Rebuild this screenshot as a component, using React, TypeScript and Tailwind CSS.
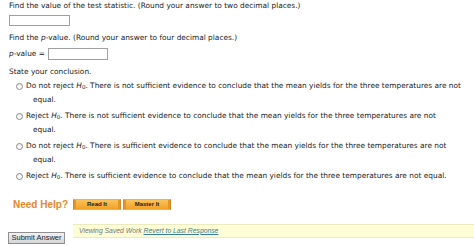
import React from "react";

const H0 = () => (
  <span>
    <span className="italic">H</span>
    <sub className="text-[5.5px] relative top-[1px] align-baseline">0</sub>
  </span>
);

const Radio = () => (
  <span className="inline-block w-[7px] h-[7px] rounded-full border border-[#8a8a8a] bg-gradient-to-b from-[#f0f0f0] to-white shrink-0" />
);

const Option = ({ first, second }: { first: React.ReactNode; second?: string }) => (
  <div className="mt-[2px]">
    <div className="flex items-center h-[14px] pl-[7px] gap-[3px] whitespace-nowrap">
      <Radio />
      <span>{first}</span>
    </div>
    {second && <div className="h-[14px] leading-[14px] pl-[24px]">{second}</div>}
  </div>
);

const OrangeBtn = ({ label }: { label: string }) => (
  <div className="w-[48px] h-[11px] flex items-center justify-center border border-[#b9b9b9] border-l-[#d08a2a] border-r-[#d08a2a] bg-gradient-to-b from-[#fbc257] to-[#f2a126] shadow-[inset_2px_0_0_#e59426,inset_-2px_0_0_#e59426] font-['Liberation_Sans',Arial,sans-serif] font-bold text-[6px] text-[#222]">
    {label}
  </div>
);

export default function App() {
  return (
    <div className="w-[474px] h-[246px] bg-white overflow-hidden font-['DejaVu_Sans',Verdana,sans-serif] text-[7.4px] text-[#222]">
      <div className="pl-[9px] pt-[1px]">
        <div className="h-[10px] leading-[10px] whitespace-nowrap">
          Find the value of the test statistic. (Round your answer to two decimal places.)
        </div>
        <div className="mt-[4px] w-[61px] h-[11px] border border-[#a0a0a0] bg-white" />
        <div className="mt-[7px] h-[10px] leading-[10px] whitespace-nowrap">
          Find the <span className="italic">p</span>-value. (Round your answer to four decimal places.)
        </div>
        <div className="mt-[5px] flex items-center h-[12px] gap-[3px]">
          <span className="whitespace-nowrap">
            <span className="italic">p</span>-value =
          </span>
          <div className="w-[60px] h-[12px] border border-[#a0a0a0] bg-white" />
        </div>
        <div className="mt-[7px] h-[10px] leading-[10px]">State your conclusion.</div>
      </div>
      <div className="pl-[9px]">
        <Option
          first={
            <>
              Do not reject <H0 />. There is not sufficient evidence to conclude that the mean yields for the three temperatures are not
            </>
          }
          second="equal."
        />
        <Option
          first={
            <>
              Reject <H0 />. There is not sufficient evidence to conclude that the mean yields for the three temperatures are not
            </>
          }
          second="equal."
        />
        <Option
          first={
            <>
              Do not reject <H0 />. There is sufficient evidence to conclude that the mean yields for the three temperatures are not
            </>
          }
          second="equal."
        />
        <Option
          first={
            <>
              Reject <H0 />. There is sufficient evidence to conclude that the mean yields for the three temperatures are not equal.
            </>
          }
        />
      </div>
      <div className="mt-[16px] flex items-center h-[11px]">
        <span className="ml-[13px] w-[60px] font-['Liberation_Sans',Arial,sans-serif] font-bold text-[10px] text-[#e8872c] whitespace-nowrap">
          Need Help?
        </span>
        <div className="flex gap-[2px]">
          <OrangeBtn label="Read It" />
          <OrangeBtn label="Master It" />
        </div>
      </div>
      <div className="mt-[14px] flex items-start">
        <div className="ml-[8px] mt-[8px] w-[57px] h-[12px] flex items-center justify-center border border-[#8f8f8f] bg-gradient-to-b from-[#f2f2f2] to-[#d6d6d6] font-['Liberation_Sans',Arial,sans-serif] text-[7.5px] text-[#222] whitespace-nowrap">
          Submit Answer
        </div>
        <div className="ml-[8px] flex-1 h-[14px] flex items-center pl-[6px] bg-[#fdfdd6] border-t border-b border-[#ecebc0] font-['Liberation_Sans',Arial,sans-serif] text-[6.8px] whitespace-nowrap">
          <span className="italic text-[#777]">Viewing Saved Work</span>
          <span className="ml-[2px] italic underline text-[#3a7f93]">Revert to Last Response</span>
        </div>
      </div>
    </div>
  );
}
